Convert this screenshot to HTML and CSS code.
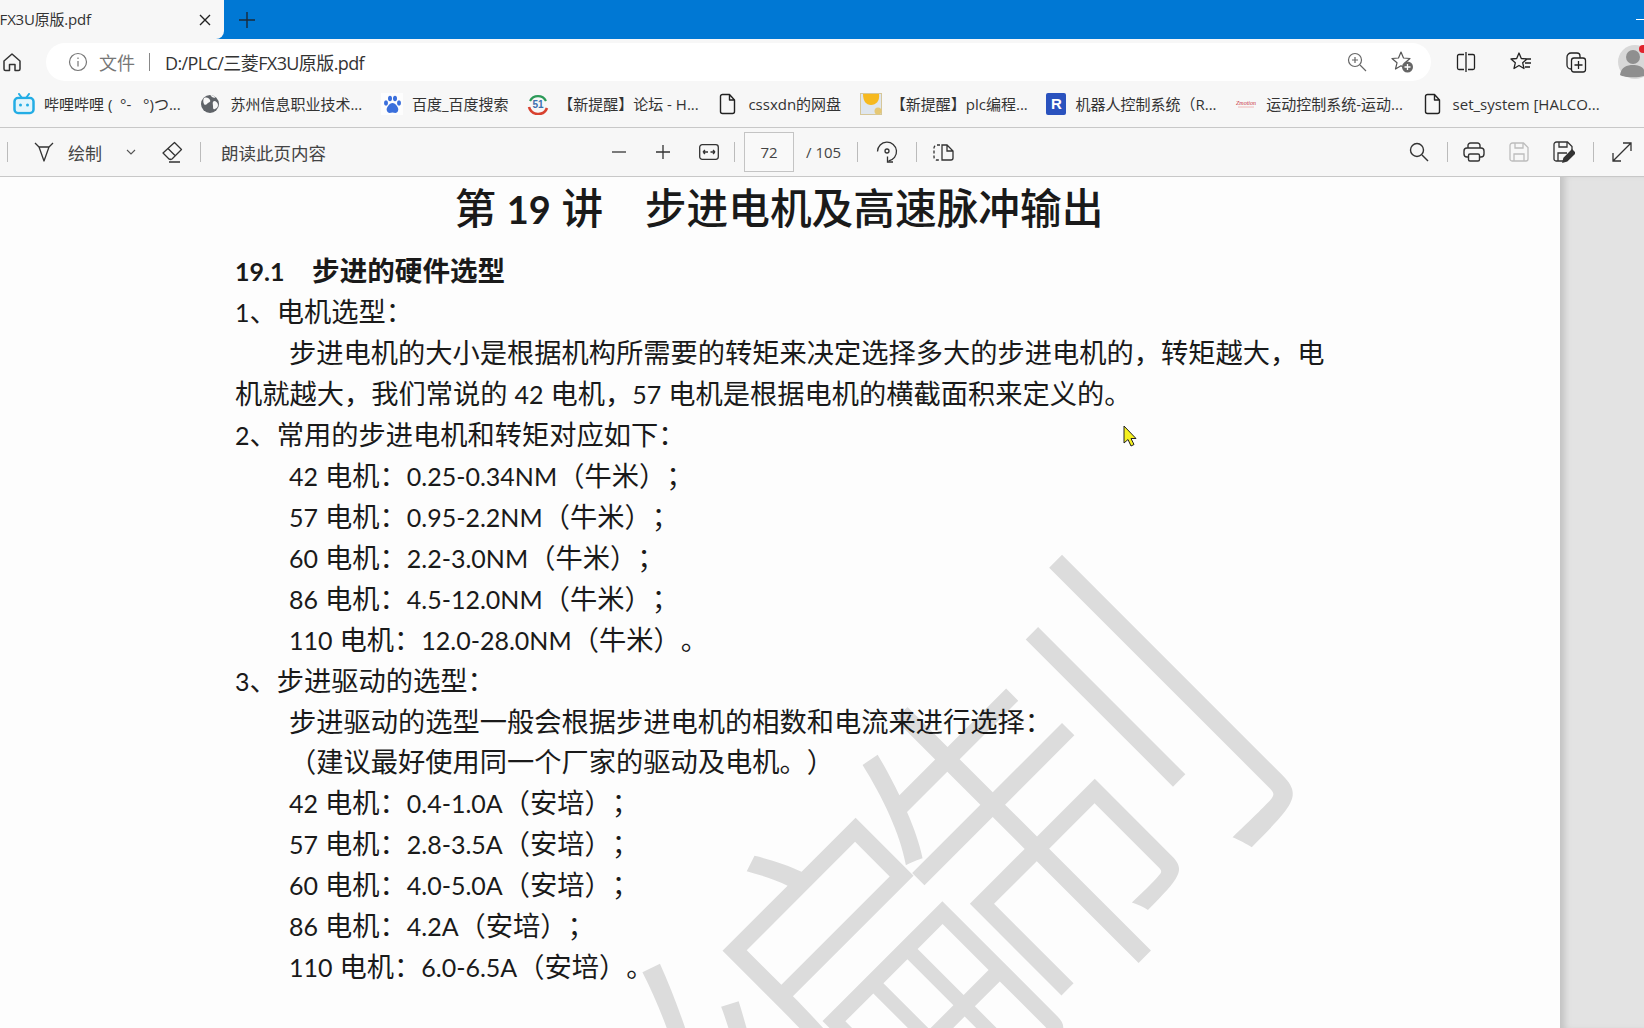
FILE: index.html
```html
<!DOCTYPE html>
<html lang="zh-CN">

<head>
    <meta charset="UTF-8">
    <meta name="viewport" content="width=device-width, initial-scale=1.0">
    <title>三菱FX3U原版.pdf</title>
    <link rel="stylesheet" href="styles.css">
</head>

<body>
    <div class="tabbar">
        <div class="tab">
            <span class="tab_title">三菱FX3U原版.pdf</span>
            <svg class="tab_close" width="12" height="12" viewBox="0 0 12 12"><path d="M1 1l10 10M11 1L1 11" stroke="#222" stroke-width="1.4"/></svg>
        </div>
        <svg class="tab_new" width="18" height="18" viewBox="0 0 18 18"><path d="M9 1v16M1 9h16" stroke="#1a2a3a" stroke-width="1.4"/></svg>
        <div class="win_min"></div>
    </div>

    <div class="addressbar">
        <svg class="home" width="20" height="20" viewBox="0 0 20 20" fill="none" stroke="#333" stroke-width="1.5"><path d="M2 9l8-7 8 7v8a1.5 1.5 0 0 1-1.5 1.5H13v-6H7.500v6H3.500A1.500 1.500 0 0 1 2 17z" stroke-linejoin="round"/></svg>
        <div class="pill">
            <svg class="info" width="20" height="20" viewBox="0 0 20 20" fill="none" stroke="#777" stroke-width="1.200"><circle cx="10" cy="10" r="8.500"/><path d="M10 9v5.500M10 5.500v1.500"/></svg>
            <span class="file_label">文件</span>
            <span class="pill_sep"></span>
            <span class="url">D:/PLC/三菱FX3U原版.pdf</span>
            <svg class="zoom_icon" width="20" height="20" viewBox="0 0 20 20" fill="none" stroke="#666" stroke-width="1.200"><circle cx="8" cy="8" r="6.500"/><path d="M13 13l6 6M8 5v6M5 8h6"/></svg>
            <svg class="star_add" width="24" height="24" viewBox="0 0 24 24" fill="none"><path d="M10 2l2.500 6 6.500.5-5 4.300 1.500 6.200L10 15.800 4.500 19 6 12.800 1 8.500 7.500 8z" stroke="#555" stroke-width="1.200" stroke-linejoin="round"/><circle cx="16.500" cy="17" r="5.500" fill="#666"/><path d="M16.500 14v6M13.500 17h6" stroke="#fff" stroke-width="1.300"/></svg>
        </div>
        <svg class="bar_icon split" width="20" height="20" viewBox="0 0 20 20" fill="none" stroke="#222" stroke-width="1.300"><path d="M8 2.500H3A1.500 1.500 0 0 0 1.500 4v12A1.500 1.500 0 0 0 3 17.500h5M12 2.500h5A1.500 1.500 0 0 1 18.500 4v12a1.500 1.500 0 0 1-1.500 1.500h-5M10 0v20"/></svg>
        <svg class="bar_icon fav" width="22" height="22" viewBox="0 0 22 22" fill="none" stroke="#222" stroke-width="1.300"><path d="M9 2l2.300 5.500 5.700.5-4.300 3.800 1.300 5.700L9 14.500l-5 3 1.300-5.700L1 8l5.700-.5zM15 8h6M15 12h6M15 16h5" stroke-linejoin="round"/></svg>
        <svg class="bar_icon coll" width="22" height="22" viewBox="0 0 22 22" fill="none" stroke="#222" stroke-width="1.300"><rect x="6.500" y="7" width="14" height="14" rx="2.500"/><path d="M13.500 10v8M9.500 14h8M6 18a4 4 0 0 1-4-4V6a4 4 0 0 1 4-4h6a3 3 0 0 1 3 3v2"/></svg>
        <div class="avatar">
            <svg width="34" height="34" viewBox="0 0 34 34"><circle cx="17" cy="17" r="17" fill="#d8d8d8"/><circle cx="15" cy="12" r="7" fill="#8f8f8f"/><path d="M2 30c1-8 7-10 13-10s12 2 13 10c-4 3-22 3-26 0z" fill="#8f8f8f"/></svg>
            <span class="avatar_dot"></span>
        </div>
    </div>

    <div class="bookmarks">
        <div class="bm">
            <svg width="22" height="22" viewBox="0 0 22 22" fill="none"><path d="M6 1l3 4M16 1l-3 4" stroke="#23ade5" stroke-width="2" stroke-linecap="round"/><rect x="1.500" y="5" width="19" height="15" rx="3.500" fill="none" stroke="#23ade5" stroke-width="2.500"/><rect x="3" y="6.500" width="16" height="12" rx="2" fill="#e3f5fc"/><circle cx="7.500" cy="12" r="1.500" fill="#23ade5"/><circle cx="14.500" cy="12" r="1.500" fill="#23ade5"/></svg>
            <span>哔哩哔哩 (&nbsp;&nbsp;°-&nbsp;&nbsp;&nbsp;°)つ...</span>
        </div>
        <div class="bm">
            <svg width="22" height="22" viewBox="0 0 22 22"><circle cx="11" cy="11" r="9" fill="#5f6368"/><path d="M5 5c3-1 5 0 6 2s-1 2-2 3-3 3-4 1-1-4 0-6zM15 8c2 0 4 2 4 4s-1 3-3 4-2-1-2-3-1-4 1-5zM12 2c1 0 3 1 4 2s-2 1-3 0-2-2-1-2z" fill="#f7f7f7"/></svg>
            <span>苏州信息职业技术...</span>
        </div>
        <div class="bm">
            <svg width="22" height="22" viewBox="0 0 22 22"><rect width="22" height="22" fill="#fdfdfd"/><g fill="#3a6fdc"><ellipse cx="5" cy="10" rx="2" ry="2.700"/><ellipse cx="9" cy="5.500" rx="2" ry="2.800"/><ellipse cx="14" cy="5.500" rx="2" ry="2.800"/><ellipse cx="18" cy="10" rx="2" ry="2.700"/><path d="M11.500 10c3 0 7 5 5.500 8s-3.500 1.500-5.500 1.500-4 1.500-5.500-1.500 2.500-8 5.500-8z"/></g></svg>
            <span>百度_百度搜索</span>
        </div>
        <div class="bm">
            <svg width="22" height="22" viewBox="0 0 22 22" fill="none"><path d="M3 8a9 9 0 0 1 16 0" stroke="#2c9a58" stroke-width="2.200"/><path d="M2 14a9.500 9.500 0 0 0 18 1" stroke="#d8412f" stroke-width="2.600"/><text x="11" y="15" text-anchor="middle" class="icon_text">51</text></svg>
            <span>【新提醒】论坛 - H...</span>
        </div>
        <div class="bm">
            <svg width="22" height="22" viewBox="0 0 22 22" fill="none" stroke="#222" stroke-width="1.400"><path d="M5.500 1.500h7l5 5.500v11.500a2 2 0 0 1-2 2h-10a2 2 0 0 1-2-2v-15a2 2 0 0 1 2-2zM12.500 1.500V7h5" stroke-linejoin="round"/></svg>
            <span>cssxdn的网盘</span>
        </div>
        <div class="bm">
            <svg width="22" height="22" viewBox="0 0 22 22"><rect x=".5" y=".5" width="21" height="21" fill="#dfe6ee" stroke="#d6c79a"/><path d="M3 1h16c1 7-3 11-8 11S3 8 3 1z" fill="#f6b91f"/><circle cx="18" cy="18" r="3.500" fill="#e6c874"/></svg>
            <span>【新提醒】plc编程...</span>
        </div>
        <div class="bm">
            <span class="r_icon">R</span>
            <span>机器人控制系统（R...</span>
        </div>
        <div class="bm">
            <svg width="22" height="22" viewBox="0 0 22 22"><text x="11" y="12" text-anchor="middle" class="motion_text">Zmotion</text><path d="M3 14h16" stroke="#f0b8b8" stroke-width="1"/></svg>
            <span>运动控制系统-运动...</span>
        </div>
        <div class="bm">
            <svg width="22" height="22" viewBox="0 0 22 22" fill="none" stroke="#222" stroke-width="1.400"><path d="M5.500 1.500h7l5 5.500v11.500a2 2 0 0 1-2 2h-10a2 2 0 0 1-2-2v-15a2 2 0 0 1 2-2zM12.500 1.500V7h5" stroke-linejoin="round"/></svg>
            <span>set_system [HALCO...</span>
        </div>
    </div>

    <div class="pdfbar">
        <div class="pdf_left">
            <span class="sep"></span>
            <svg class="draw_icon" width="20" height="20" viewBox="0 0 20 20" fill="none" stroke="#333" stroke-width="1.300"><path d="M1 1l4 4h10l4-4M5 5l5 14 5-14" stroke-linejoin="round"/></svg>
            <span class="draw_label">绘制</span>
            <svg class="chev" width="12" height="8" viewBox="0 0 12 8" fill="none" stroke="#555" stroke-width="1.100"><path d="M2 2l4 4 4-4"/></svg>
            <svg class="eraser" width="22" height="22" viewBox="0 0 22 22" fill="none" stroke="#333" stroke-width="1.300"><path d="M13.500 1.500l7 7-9.500 9.500-1 .5-2-.5-6-6z" stroke-linejoin="round"/><path d="M7 7.500l7 7M8 21h11"/></svg>
            <span class="sep sep_read"></span>
            <span class="read_label">朗读此页内容</span>
        </div>
        <div class="pdf_mid">
            <svg class="tool" width="16" height="16" viewBox="0 0 16 16" stroke="#444" stroke-width="1.400"><path d="M1 8h14"/></svg>
            <svg class="tool" width="16" height="16" viewBox="0 0 16 16" stroke="#333" stroke-width="1.300"><path d="M1 8h14M8 1v14"/></svg>
            <svg class="tool" width="20" height="16" viewBox="0 0 20 16" fill="none" stroke="#333" stroke-width="1.300"><rect x=".7" y=".7" width="18.600" height="14.600" rx="2.500"/><path d="M4 8h5M4 8l2-2M4 8l2 2M16 8h-4.500M16 8l-2-2M16 8l-2 2"/></svg>
            <span class="sep"></span>
            <span class="page_box">72</span>
            <span class="page_total">/ 105</span>
            <span class="sep"></span>
            <svg class="tool rotate_icon" width="22" height="22" viewBox="0 0 22 22" fill="none" stroke="#333" stroke-width="1.300"><path d="M1.500 10.500A9.500 9.500 0 1 1 12.500 20"/><circle cx="11" cy="10" r="2"/><path d="M11.500 15.500v5.500H17"/></svg>
            <span class="sep"></span>
            <svg class="tool two_page" width="21" height="17" viewBox="0 0 21 17" fill="none" stroke="#333" stroke-width="1.300"><path d="M7 1H4a3 3 0 0 0-3 3v9a3 3 0 0 0 3 3h3" stroke-dasharray="3 2"/><path d="M9 1h5l6 6v7a2 2 0 0 1-2 2H9zM14 1v6h6"/></svg>
        </div>
        <div class="pdf_right">
            <svg class="tool" width="20" height="20" viewBox="0 0 20 20" fill="none" stroke="#333" stroke-width="1.400"><circle cx="8" cy="8" r="6.500"/><path d="M13 13l6 6"/></svg>
            <span class="sep sep_search"></span>
            <svg class="tool" width="22" height="20" viewBox="0 0 22 20" fill="none" stroke="#333" stroke-width="1.400"><path d="M5 6V3.500A2.500 2.500 0 0 1 7.500 1h7A2.500 2.500 0 0 1 17 3.500V6M5 15H4a3 3 0 0 1-3-3V9a3 3 0 0 1 3-3h14a3 3 0 0 1 3 3v3a3 3 0 0 1-3 3h-1"/><rect x="5.500" y="12" width="11" height="7" rx="1.500"/></svg>
            <svg class="tool" width="20" height="20" viewBox="0 0 20 20" fill="none" stroke="#bdbdbd" stroke-width="1.300"><path d="M3.500 1h11L19 5.500V17a2 2 0 0 1-2 2H3a2 2 0 0 1-2-2V3.500A2.500 2.500 0 0 1 3.500 1zM6 1v5h8V1M5 19v-7h10v7"/></svg>
            <svg class="tool" width="22" height="22" viewBox="0 0 22 22" fill="none" stroke="#333" stroke-width="1.300"><path d="M10 20H3a2 2 0 0 1-2-2V3.500A2.500 2.500 0 0 1 3.500 1h11L19 5.500V10M6 1v5h8V1M5 20v-8h9"/><path d="M10 21l1-4 8-8 3 3-8 8z" fill="#333"/></svg>
            <span class="sep"></span>
            <svg class="tool" width="20" height="20" viewBox="0 0 20 20" fill="none" stroke="#333" stroke-width="1.300"><path d="M1 19L19 1M11 1h8v8M1 11v8h8"/></svg>
        </div>
    </div>

    <div class="viewer">
        <div class="page">
            <div class="watermark">编制</div>
            <div class="doc">
                <div class="title">第 <span class="en">19</span> 讲　步进电机及高速脉冲输出</div>
                <div class="heading"><span class="en">19.1</span>　步进的硬件选型</div>
                <div class="line"><span class="en">1</span>、电机选型：</div>
                <div class="line indent">步进电机的大小是根据机构所需要的转矩来决定选择多大的步进电机的，转矩越大，电</div>
                <div class="line">机就越大，我们常说的 <span class="en">42</span> 电机，<span class="en">57</span> 电机是根据电机的横截面积来定义的。</div>
                <div class="line"><span class="en">2</span>、常用的步进电机和转矩对应如下：</div>
                <div class="line indent"><span class="en">42</span> 电机：<span class="en">0.25-0.34NM</span>（牛米）；</div>
                <div class="line indent"><span class="en">57</span> 电机：<span class="en">0.95-2.2NM</span>（牛米）；</div>
                <div class="line indent"><span class="en">60</span> 电机：<span class="en">2.2-3.0NM</span>（牛米）；</div>
                <div class="line indent"><span class="en">86</span> 电机：<span class="en">4.5-12.0NM</span>（牛米）；</div>
                <div class="line indent"><span class="en">110</span> 电机：<span class="en">12.0-28.0NM</span>（牛米）。</div>
                <div class="line"><span class="en">3</span>、步进驱动的选型：</div>
                <div class="line indent">步进驱动的选型一般会根据步进电机的相数和电流来进行选择：</div>
                <div class="line indent">（建议最好使用同一个厂家的驱动及电机。）</div>
                <div class="line indent"><span class="en">42</span> 电机：<span class="en">0.4-1.0A</span>（安培）；</div>
                <div class="line indent"><span class="en">57</span> 电机：<span class="en">2.8-3.5A</span>（安培）；</div>
                <div class="line indent"><span class="en">60</span> 电机：<span class="en">4.0-5.0A</span>（安培）；</div>
                <div class="line indent"><span class="en">86</span> 电机：<span class="en">4.2A</span>（安培）；</div>
                <div class="line indent"><span class="en">110</span> 电机：<span class="en">6.0-6.5A</span>（安培）。</div>
            </div>
            <svg class="cursor" width="14" height="22" viewBox="0 0 14 22"><path d="M1 1v17l4-3.500 3 6.500 3-1.500-3-6h5z" fill="#f5f01e" stroke="#222" stroke-width="1"/></svg>
        </div>
        <div class="side"></div>
    </div>
</body>

</html>
```

FILE: styles.css
```css
* {
    margin: 0;
    padding: 0;
    box-sizing: border-box;
}

body {
    width: 1644px;
    height: 1028px;
    overflow: hidden;
    background-color: #f7f7f7;
    font-family: "Open Sans", "Noto Sans CJK SC", sans-serif;
    color: #333;
    display: flex;
    flex-direction: column;
    text-spacing-trim: space-all;
}

/* Tab strip */

.tabbar {
    height: 39px;
    flex: none;
    background-color: #0078d4;
    display: flex;
    align-items: center;
}

.tab {
    width: 224px;
    height: 39px;
    background-color: #f7f7f7;
    border-bottom-right-radius: 8px;
    display: flex;
    align-items: center;
    overflow: hidden;
}

.tab_title {
    margin-left: -30px;
    padding-bottom: 2px;
    font-size: 15px;
    letter-spacing: -0.2px;
    white-space: nowrap;
    width: 229px;
    flex: none;
    color: #333;
}

.tab_close {
    flex: none;
}

.tab_new {
    margin-left: 14px;
}

.win_min {
    width: 8px;
    height: 1px;
    background-color: #fff;
    margin-left: auto;
}

/* Address row */

.addressbar {
    height: 43px;
    flex: none;
    display: flex;
    align-items: center;
    padding-top: 3px;
}

.home {
    margin-left: 2px;
    flex: none;
}

.pill {
    width: 1385px;
    height: 38px;
    margin-left: 24px;
    background-color: #fff;
    border-radius: 19px;
    display: flex;
    align-items: center;
    flex: none;
}

.info {
    margin-left: 22px;
}

.file_label {
    margin-left: 11px;
    padding-bottom: 1px;
    font-size: 18px;
    color: #777;
}

.pill_sep {
    width: 1px;
    height: 18px;
    background-color: #888;
    margin-left: 14px;
}

.url {
    margin-left: 15px;
    padding-bottom: 1px;
    font-size: 18px;
    color: #333;
    letter-spacing: -0.6px;
}

.zoom_icon {
    margin-left: auto;
}

.star_add {
    margin-left: 24px;
    margin-right: 16px;
}

.bar_icon {
    flex: none;
}

.split {
    margin-left: 25px;
}

.fav {
    margin-left: 34px;
}

.coll {
    margin-left: 33px;
}

.avatar {
    position: relative;
    margin-left: 31px;
    width: 34px;
    height: 34px;
    flex: none;
}

.avatar_dot {
    position: absolute;
    top: 0;
    right: 5px;
    width: 8px;
    height: 8px;
    border-radius: 50%;
    background-color: #e0222c;
}

/* Favourites row */

.bookmarks {
    height: 45px;
    flex: none;
    display: flex;
    align-items: center;
    padding-left: 13px;
    padding-bottom: 2px;
    gap: 18.700px;
    font-size: 15px;
    color: #333;
    white-space: nowrap;
}

.bm {
    display: flex;
    align-items: center;
    gap: 9px;
}

.bm svg {
    flex: none;
}

.icon_text {
    font-family: "Liberation Sans", sans-serif;
    font-size: 10px;
    font-weight: 700;
    fill: #3a6fb0;
}

.motion_text {
    font-family: "Liberation Serif", serif;
    font-size: 6px;
    font-style: italic;
    fill: #c8323c;
}

.r_icon {
    width: 20px;
    height: 22px;
    background-color: #2a52be;
    color: #fff;
    border-radius: 2px;
    font-family: "Liberation Sans", sans-serif;
    font-weight: 700;
    font-size: 15px;
    text-align: center;
    line-height: 22px;
}

/* PDF toolbar */

.pdfbar {
    height: 50px;
    flex: none;
    border-top: 1px solid #c8c8c8;
    border-bottom: 1px solid #c8c8c8;
    display: grid;
    grid-template-columns: 597px auto 1fr auto;
    align-items: center;
    font-size: 17px;
    color: #444;
}

.pdf_left,
.pdf_mid,
.pdf_right {
    display: flex;
    align-items: center;
}

.pdf_mid {
    grid-column: 2;
}

.pdf_right {
    grid-column: 4;
}

.sep {
    width: 1px;
    height: 20px;
    background-color: #bbb;
    flex: none;
}

.pdf_left .sep {
    margin-left: 7px;
}

.draw_icon {
    margin-left: 26px;
}

.draw_label {
    margin-left: 14px;
}

.chev {
    margin-left: 23px;
}

.eraser {
    margin-left: 24px;
}

.pdf_left .sep_read {
    margin-left: 17px;
}

.read_label {
    margin-left: 20px;
    font-size: 17.500px;
    white-space: nowrap;
}

.pdf_mid .tool {
    margin: 0 14px;
    flex: none;
}

.pdf_mid .rotate_icon {
    margin: 0 17px 0 18px;
}

.pdf_mid .two_page {
    margin-left: 16px;
}

.pdf_mid .sep {
    margin: 0 0 0 1px;
}

.page_box {
    width: 50px;
    height: 40px;
    margin-left: 9px;
    border: 1px solid #c4c4c4;
    background-color: #f9f9f9;
    font-size: 15px;
    text-align: center;
    line-height: 38px;
}

.page_total {
    margin: 0 15px 0 12px;
    font-size: 15px;
    white-space: nowrap;
}

.pdf_right .tool {
    margin: 0 12px;
    flex: none;
}

.pdf_right .sep {
    margin: 0 6px;
}

.pdf_right .sep_search {
    margin: 0 3px 0 6px;
}

/* Document view */

.viewer {
    flex: 1;
    display: flex;
    overflow: hidden;
}

.page {
    width: 1560px;
    flex: none;
    background-color: #fdfdfd;
    position: relative;
    overflow: hidden;
}

.side {
    flex: 1;
    background-color: #e3e3e3;
    box-shadow: inset 8px 0 6px -3px #c4c4c4;
}

.watermark {
    position: absolute;
    left: 575px;
    top: 505px;
    width: 760px;
    height: 380px;
    font-family: "Noto Sans CJK SC", sans-serif;
    font-size: 380px;
    font-weight: 300;
    line-height: 380px;
    letter-spacing: -50px;
    color: #dcdcdc;
    white-space: nowrap;
    transform: rotate(-45deg);
}

.doc {
    position: relative;
    width: 1088px;
    margin-left: 235px;
    font-family: Lato, "Noto Sans CJK SC", sans-serif;
    font-size: 27.250px;
    color: #1a1a1a;
}

.en {
    font-size: 25px;
}

.title {
    height: 62px;
    line-height: 62px;
    font-size: 41.700px;
    font-weight: 500;
    text-align: center;
    white-space: nowrap;
}

.title .en {
    font-size: 38px;
    font-weight: 700;
}

.heading {
    margin-top: 11px;
    line-height: 41px;
    font-size: 27.600px;
    font-weight: 700;
    white-space: nowrap;
}

.line {
    line-height: 40.960px;
    white-space: nowrap;
}

.indent {
    padding-left: 54px;
}

.cursor {
    position: absolute;
    left: 1123px;
    top: 248px;
}
```
